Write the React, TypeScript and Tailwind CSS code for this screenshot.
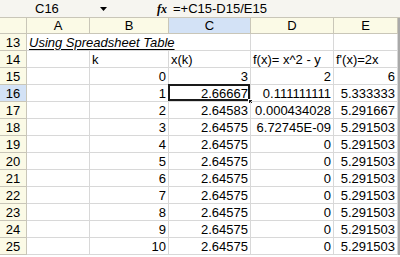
import React from 'react';

const cols = ['A', 'B', 'C', 'D', 'E'];

type Row = { n: number; a?: string; b?: string; c?: string; d?: string; e?: string };

const rows: Row[] = [
  { n: 13 },
  { n: 14, b: 'k', c: 'x(k)', d: 'f(x)= x^2 - y', e: "f'(x)=2x" },
  { n: 15, b: '0', c: '3', d: '2', e: '6' },
  { n: 16, b: '1', c: '2.66667', d: '0.111111111', e: '5.333333' },
  { n: 17, b: '2', c: '2.64583', d: '0.000434028', e: '5.291667' },
  { n: 18, b: '3', c: '2.64575', d: '6.72745E-09', e: '5.291503' },
  { n: 19, b: '4', c: '2.64575', d: '0', e: '5.291503' },
  { n: 20, b: '5', c: '2.64575', d: '0', e: '5.291503' },
  { n: 21, b: '6', c: '2.64575', d: '0', e: '5.291503' },
  { n: 22, b: '7', c: '2.64575', d: '0', e: '5.291503' },
  { n: 23, b: '8', c: '2.64575', d: '0', e: '5.291503' },
  { n: 24, b: '9', c: '2.64575', d: '0', e: '5.291503' },
  { n: 25, b: '10', c: '2.64575', d: '0', e: '5.291503' },
];

const grid = 'grid grid-cols-[27px_63px_79px_82px_83px_64px_2px]';

export default function App() {
  return (
    <div className="w-[400px] h-[257px] overflow-hidden bg-white text-[13px] leading-none text-black font-['Liberation_Sans',Arial,sans-serif]">
      {/* formula bar */}
      <div className="flex items-center h-[18px] bg-[#f6f5f0] border-b border-[#c9c6b8]">
        <div className="w-[92px] pl-[35px]">C16</div>
        <div className="w-[60px] flex">
          <svg width="7" height="4" viewBox="0 0 7 4" className="ml-[8px]">
            <path d="M0 0h7L3.5 4z" fill="#000" />
          </svg>
        </div>
        <div className="w-[21px] pl-[5px] italic font-['Liberation_Serif',serif] font-bold text-[12px]">fx</div>
        <div>=+C15-D15/E15</div>
      </div>

      {/* column headers */}
      <div className={`${grid} h-[16px]`}>
        <div className="bg-[#fbfae6] border-r border-b border-[#c9c6b8]" />
        {cols.map((c) => (
          <div
            key={c}
            className={`flex items-center justify-center border-r border-b border-[#c9c6b8] ${
              c === 'C' ? 'bg-[#d3e2f6]' : 'bg-[#fbfae6]'
            }`}
          >
            {c}
          </div>
        ))}
        <div className="bg-[#a9a9a9]" />
      </div>

      {rows.map((r) => (
        <div key={r.n} className={`${grid} h-[17px]`}>
          <div
            className={`flex items-center justify-center border-r border-b border-[#c9c6b8] ${
              r.n === 16 ? 'bg-[#d3e2f6]' : 'bg-[#fbfae6]'
            }`}
          >
            {r.n}
          </div>
          {r.n === 13 ? (
            <div className="col-span-2 flex items-center pl-[2px] italic underline underline-offset-2 border-b border-[#d8d8d8] whitespace-nowrap">
              Using Spreadsheet Table
            </div>
          ) : (
            <>
              <div className="border-r border-b border-[#d8d8d8]" />
              <Cell v={r.b} />
            </>
          )}
          <Cell v={r.c} selected={r.n === 16} />
          <Cell v={r.d} />
          <Cell v={r.e} />
          <div className="bg-[#a9a9a9]" />
        </div>
      ))}
    </div>
  );
}

function Cell({ v, selected = false }: { v?: string; selected?: boolean }) {
  const isNum = v !== undefined && /^[0-9.E-]+$/.test(v);
  return (
    <div
      className={`relative flex items-center px-[2px] border-r border-b border-[#d8d8d8] whitespace-nowrap ${
        isNum ? 'justify-end' : 'justify-start'
      }`}
    >
      {v}
      {selected && (
        <>
          <div className="absolute -left-[1px] -top-[1px] -right-[0px] -bottom-[0px] border-2 border-[#1a1a1a]" />
          <div className="absolute -right-[3px] -bottom-[3px] w-[5px] h-[5px] bg-[#1a1a1a] border border-white" />
        </>
      )}
    </div>
  );
}
